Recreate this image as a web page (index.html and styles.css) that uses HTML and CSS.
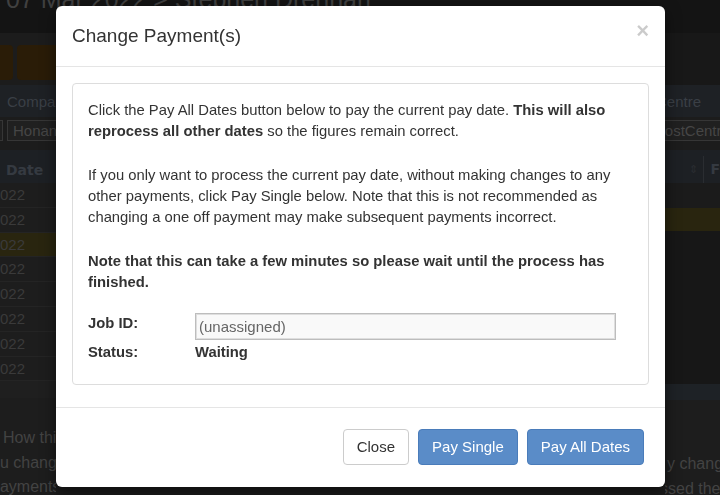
FILE: index.html
```html
<!DOCTYPE html>
<html lang="en">
<head>
<meta charset="utf-8">
<title>Change Payment(s)</title>
<link rel="stylesheet" href="styles.css">
</head>
<body>
<div class="page">
  <header class="topbar"><h1 class="page-title">07 Mar 2022 &gt; Stephen Drennan</h1></header>
  <div class="workspace">
    <div class="side side-left">
      <div class="toolbar">
        <span class="tool-btn tool-btn-a"></span>
        <span class="tool-btn tool-btn-b"></span>
      </div>
      <div class="filter-label">Company</div>
      <div class="filter-inputs">
        <span class="fake-input fake-input-a"></span>
        <span class="fake-input fake-input-b">Honand</span>
      </div>
      <div class="grid-head"><span class="grid-date">Date</span></div>
      <div class="grid-row"><span class="date-cell">10/01/2022</span></div>
      <div class="grid-row"><span class="date-cell">17/01/2022</span></div>
      <div class="grid-row grid-row-hl"><span class="date-cell">24/01/2022</span></div>
      <div class="grid-row"><span class="date-cell">31/01/2022</span></div>
      <div class="grid-row"><span class="date-cell">07/02/2022</span></div>
      <div class="grid-row"><span class="date-cell">14/02/2022</span></div>
      <div class="grid-row"><span class="date-cell">21/02/2022</span></div>
      <div class="grid-row"><span class="date-cell">28/02/2022</span></div>
      <div class="grid-foot"></div>
      <div class="notes">
        <div class="note-line note-a">How this works</div>
        <div class="note-line note-b">you change</div>
        <div class="note-line note-c">payments.</div>
      </div>
    </div>
    <div class="center"></div>
    <div class="side side-right">
      <div class="toolbar-r"></div>
      <div class="filter-label filter-label-r">Centre</div>
      <div class="filter-inputs filter-inputs-r">
        <span class="fake-input fake-input-r">CostCentre</span>
      </div>
      <div class="grid-head grid-head-r">
        <span class="sort-icon">&#8661;</span>
        <span class="col-f">F</span>
      </div>
      <div class="grid-row-r"></div>
      <div class="grid-row-r grid-row-hl"></div>
      <div class="grid-fill"></div>
      <div class="grid-foot-r"></div>
      <div class="notes notes-r">
        <div class="note-line"></div>
        <div class="note-line note-d">y change</div>
        <div class="note-line note-e">ssed the p</div>
      </div>
    </div>
  </div>
</div>

<div class="modal" role="dialog" aria-labelledby="modal-title">
  <div class="modal-header">
    <h4 class="modal-title" id="modal-title">Change Payment(s)</h4>
    <button class="close" type="button" aria-label="Close">&times;</button>
  </div>
  <div class="modal-body">
    <div class="panel">
      <p>Click the Pay All Dates button below to pay the current pay date. <strong>This will also reprocess all other dates</strong> so the figures remain correct.</p>
      <p>If you only want to process the current pay date, without making changes to any other payments, click Pay Single below. Note that this is not recommended as changing a one off payment may make subsequent payments incorrect.</p>
      <p class="p-last"><strong>Note that this can take a few minutes so please wait until the process has finished.</strong></p>
      <div class="job-grid">
        <span class="job-label">Job ID:</span>
        <input class="job-input" type="text" value="(unassigned)" readonly>
        <span class="job-label">Status:</span>
        <span class="job-value">Waiting</span>
      </div>
    </div>
  </div>
  <div class="modal-footer">
    <button class="btn btn-default" type="button">Close</button>
    <button class="btn btn-primary" type="button">Pay Single</button>
    <button class="btn btn-primary" type="button">Pay All Dates</button>
  </div>
</div>
</body>
</html>
```

FILE: styles.css
```css
* { box-sizing: border-box; }
html, body { margin: 0; padding: 0; }
body {
  width: 720px;
  height: 495px;
  overflow: hidden;
  background: #1b1b1b;
  font-family: "Liberation Sans", Arial, sans-serif;
}

/* ---------- dimmed page behind the dialog ---------- */
.page { width: 720px; height: 495px; display: flex; flex-direction: column; }
.topbar { height: 33px; flex: none; background: #141414; overflow: hidden; }
.page-title {
  margin: -16px 0 0 6px;
  font-size: 25px;
  line-height: 30px;
  font-weight: normal;
  color: #404040;
  white-space: nowrap;
}
.workspace { flex: 1; display: flex; min-height: 0; }
.side { display: flex; flex-direction: column; overflow: hidden; flex: none; }
.side-left { width: 56px; }
.side-right { width: 55px; }
.center { flex: 1; background: #1b1b1b; }

.toolbar {
  height: 52px;
  flex: none;
  background: #1c1c1c;
  display: flex;
  gap: 4px;
  padding-top: 12px;
  margin-left: -26px;
}
.tool-btn { height: 35px; border-radius: 4px; background: #2a1c07; flex: none; }
.tool-btn-a { width: 39px; }
.tool-btn-b { width: 80px; }

.filter-label {
  height: 32px;
  flex: none;
  background: #1e2125;
  color: #3a3f46;
  font-size: 15px;
  line-height: 34px;
  padding-left: 7px;
  white-space: nowrap;
}
.filter-inputs {
  height: 33px;
  flex: none;
  background: #1c1c1c;
  display: flex;
  gap: 4px;
  padding-top: 3px;
  margin-left: -20px;
}
.fake-input {
  height: 21px;
  flex: none;
  border: 1px solid #363636;
  background: #202020;
  color: #464646;
  font-size: 15px;
  line-height: 19px;
  padding-left: 5px;
  white-space: nowrap;
  overflow: hidden;
}
.fake-input-a { width: 23px; }
.fake-input-b { width: 80px; }

.grid-head {
  height: 33px;
  flex: none;
  background: #1d2024;
  padding: 8px 0 0 6px;
  white-space: nowrap;
}
.grid-date {
  font-family: "DejaVu Sans", Verdana, sans-serif;
  font-weight: bold;
  font-size: 14px;
  line-height: 25px;
  color: #353a41;
}
.grid-row {
  height: 24.8px;
  flex: none;
  background: #1d1d1d;
  border-bottom: 1px solid #242424;
  display: flex;
  justify-content: flex-end;
}
.side-left .grid-row { width: 56px; padding-right: 31px; }
.grid-row-hl { background: #29250f; }
.date-cell {
  font-size: 15px;
  line-height: 24px;
  color: #3a3a3a;
  white-space: nowrap;
}
.grid-foot { height: 17px; flex: none; background: #1f1f1f; }
.notes { flex: 1; background: #1d1d1d; padding-top: 28px; }
.note-line {
  height: 24.5px;
  font-size: 16px;
  line-height: 24.5px;
  color: #434343;
  white-space: nowrap;
}
.note-a { padding-left: 3px; }
.note-b { margin-left: -17px; }
.note-c { margin-left: -9px; }

/* right strip */
.toolbar-r { height: 52px; flex: none; background: #181818; }
.filter-label-r { padding-left: 0; margin-left: -9px; }
.filter-inputs-r { margin-left: 0; padding-top: 3px; }
.fake-input-r {
  width: 80px;
  margin-left: -11px;
  border-left: 0;
  padding-left: 0;
}
.grid-head-r {
  display: flex;
  align-items: flex-start;
  padding: 6px 0 0 24px;
}
.sort-icon {
  font-family: "DejaVu Sans", sans-serif;
  font-size: 11px;
  color: #2a2d31;
  width: 16px;
  line-height: 27px;
}
.col-f {
  font-family: "DejaVu Sans", Verdana, sans-serif;
  font-weight: bold;
  font-size: 14px;
  color: #353a41;
  line-height: 27px;
  border-left: 1px solid #2a2d31;
  padding-left: 6px;
  height: 27px;
}
.grid-row-r { height: 24.8px; flex: none; background: #1b1b1b; }
.grid-row-r.grid-row-hl { height: 23px; background: #29250f; }
.grid-fill { height: 153px; flex: none; background: #171717; }
.grid-foot-r { height: 16px; flex: none; background: #1e2226; }
.notes-r { padding-top: 28px; }
.note-d { padding-left: 2px; }
.note-e { margin-left: -5px; }

/* ---------- dialog ---------- */
.modal {
  position: fixed;
  left: 56px;
  top: 6px;
  width: 609px;
  background: #fff;
  border-radius: 6px;
  box-shadow: 0 5px 15px rgba(0, 0, 0, 0.5);
  color: #333;
  font-size: 14.8px;
  line-height: 21px;
}
.modal-header {
  padding: 16px;
  border-bottom: 1px solid #e5e5e5;
  display: flex;
  justify-content: space-between;
  align-items: flex-start;
}
.modal-title {
  margin: 0;
  font-size: 19px;
  line-height: 28px;
  font-weight: normal;
}
.close {
  margin-top: -2px;
  padding: 0;
  border: 0;
  background: transparent;
  font-family: inherit;
  font-size: 22px;
  font-weight: bold;
  line-height: 1;
  color: #000;
  opacity: 0.2;
}
.modal-body { padding: 16px 16px 0; }
.panel {
  border: 1px solid #ddd;
  border-radius: 4px;
  padding: 16px 15px 21px;
  margin-bottom: 22px;
}
.panel p { margin: 0 0 23px; }
.panel p.p-last { margin-bottom: 20px; }
.job-grid {
  display: grid;
  grid-template-columns: 107px 421px;
  row-gap: 2px;
  align-items: start;
}
.job-label { font-weight: bold; }
.job-value { font-weight: bold; }
.job-input {
  height: 27px;
  width: 421px;
  margin: 0;
  padding: 0 3px;
  border: 1px solid #bdbdbd;
  box-shadow: inset 0 0 0 1px #dedede;
  background: #f9f9f9;
  font-family: inherit;
  font-size: 15px;
  color: #666;
  outline: none;
}
.modal-footer {
  border-top: 1px solid #e5e5e5;
  padding: 21px 21px 22px;
  display: flex;
  justify-content: flex-end;
  gap: 9px;
}
.btn {
  height: 36px;
  padding: 0 13px;
  border: 1px solid transparent;
  border-radius: 4px;
  font-family: inherit;
  font-size: 15px;
  line-height: 34px;
}
.btn-default { background: #fff; border-color: #ccc; color: #333; }
.btn-primary { background: #5a8cc8; border-color: #4a7cba; color: #fff; }
```
